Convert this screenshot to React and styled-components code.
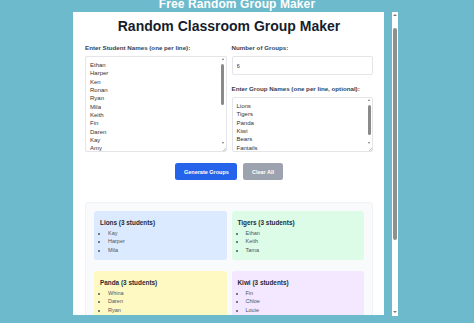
import React from 'react';
import styled, { createGlobalStyle } from 'styled-components';

const GlobalStyle = createGlobalStyle`
  html, body {
    margin: 0;
    padding: 0;
    height: 323px;
    overflow: hidden;
    background: #6cbacc;
    font-family: "Liberation Sans", Arial, sans-serif;
  }
  * { box-sizing: border-box; }
`;

const SiteTitle = styled.div`
  margin: -2px 0 2px;
  height: 12px;
  font-size: 12px;
  line-height: 12px;
  font-weight: 700;
  color: #ffffff;
  text-align: center;
  letter-spacing: 0.1px;
`;

const Frame = styled.div`
  display: flex;
  justify-content: center;
  gap: 8px;
  padding-right: 3px;
`;

const Panel = styled.div`
  width: 311px;
  height: 303px;
  padding: 6px 11px 0 12px;
  background: #ffffff;
  overflow: hidden;
`;

const Heading = styled.h1`
  margin: 0 0 10px;
  font-size: 14px;
  line-height: 16px;
  font-weight: 700;
  color: #161d2b;
  text-align: center;
`;

const FormGrid = styled.div`
  display: grid;
  grid-template-columns: 1fr 1fr;
  column-gap: 5px;
`;

const Field = styled.div`
  display: flex;
  flex-direction: column;
`;

const Label = styled.label`
  display: block;
  margin-bottom: 4px;
  font-size: 6.2px;
  line-height: 8px;
  font-weight: 700;
  color: #374151;
`;

const AreaWrap = styled.div`
  position: relative;
  height: ${(p) => p.$height}px;
`;

const TextArea = styled.textarea`
  display: block;
  width: 100%;
  height: 100%;
  margin: 0;
  padding: 4px 10px 4px 4px;
  border: 1px solid #e3e5e8;
  border-radius: 2px;
  font-family: "Liberation Sans", Arial, sans-serif;
  font-size: 6px;
  line-height: 8.33px;
  color: #333333;
  background: #ffffff;
  resize: none;
  overflow: hidden;
  outline: none;
`;

const NumberInput = styled.input`
  display: block;
  width: 100%;
  height: 19px;
  margin: 0 0 10px;
  padding: 0 4px;
  border: 1px solid #e3e5e8;
  border-radius: 2px;
  font-family: "Liberation Sans", Arial, sans-serif;
  font-size: 6px;
  color: #333333;
  outline: none;
`;

const MiniScroll = styled.div`
  position: absolute;
  top: 1px;
  right: 2px;
  bottom: 7px;
  width: 4px;
  display: flex;
  flex-direction: column;
  align-items: center;
`;

const Arrow = styled.div`
  flex: none;
  width: 0;
  height: 0;
  margin: ${(p) => (p.$dir === 'up' ? '1px 0 2px' : '2px 0 1px')};
  border-left: 1.5px solid transparent;
  border-right: 1.5px solid transparent;
  ${(p) => (p.$dir === 'up' ? 'border-bottom' : 'border-top')}: 2px solid #7a7a7a;
`;

const MiniThumb = styled.div`
  flex: none;
  width: 3px;
  height: ${(p) => p.$height}px;
  margin-top: 2px;
  border-radius: 2px;
  background: #8a8a8a;
`;

const Spacer = styled.div`
  flex: 1;
`;

const Grip = styled.svg`
  position: absolute;
  right: 1px;
  bottom: 1px;
  width: 4px;
  height: 4px;
`;

const ButtonRow = styled.div`
  display: flex;
  justify-content: center;
  gap: 6px;
  margin-top: 11px;
`;

const Button = styled.button`
  height: 17px;
  padding: 0 8.5px;
  border: none;
  border-radius: 2.5px;
  background: ${(p) => (p.$variant === 'gray' ? '#9ca3af' : '#2563eb')};
  color: #ffffff;
  font-family: "Liberation Sans", Arial, sans-serif;
  font-size: 5.5px;
  font-weight: 700;
  cursor: pointer;
`;

const Results = styled.div`
  display: grid;
  grid-template-columns: 1fr 1fr;
  column-gap: 5px;
  row-gap: 11px;
  margin-top: 22px;
  padding: 8px 8px;
  background: #f9fafb;
  border: 1px solid #f1f2f4;
  border-radius: 3px;
`;

const Card = styled.div`
  padding: 7px 6px 6px;
  border-radius: 3px;
  background: ${(p) => p.$bg};
`;

const CardTitle = styled.h3`
  margin: 0 0 2px;
  font-size: 6.4px;
  line-height: 9px;
  font-weight: 700;
  color: #1f2937;
`;

const Members = styled.ul`
  margin: 0;
  padding-left: 8px;
  list-style: disc;
`;

const Member = styled.li`
  font-size: 5.5px;
  line-height: 8.33px;
  color: #4b5563;
`;

const PageScroll = styled.div`
  width: 6px;
  height: 304px;
  padding: 1px 0 2px;
  background: #ffffff;
  display: flex;
  flex-direction: column;
  align-items: center;
`;

const PageArrow = styled.div`
  flex: none;
  width: 0;
  height: 0;
  margin: 1px 0;
  border-left: 2px solid transparent;
  border-right: 2px solid transparent;
  ${(p) => (p.$dir === 'up' ? 'border-bottom' : 'border-top')}: 2px solid #7a7a7a;
`;

const PageThumb = styled.div`
  flex: none;
  width: 4px;
  height: 212px;
  margin-top: 11px;
  border-radius: 2px;
  background: #8f8f8f;
`;

const students = ['Ethan', 'Harper', 'Ken', 'Ronan', 'Ryan', 'Mila', 'Keith', 'Fin', 'Daren', 'Kay', 'Amy', 'Whina', 'Chloe', 'Tama', 'Louie'];
const groupNames = ['Lions', 'Tigers', 'Panda', 'Kiwi', 'Bears', 'Fantails'];

const groups = [
  { name: 'Lions', bg: '#dbeafe', members: ['Kay', 'Harper', 'Mila'] },
  { name: 'Tigers', bg: '#dcfce7', members: ['Ethan', 'Keith', 'Tama'] },
  { name: 'Panda', bg: '#fef9c3', members: ['Whina', 'Daren', 'Ryan'] },
  { name: 'Kiwi', bg: '#f3e8ff', members: ['Fin', 'Chloe', 'Louie'] },
];

const FakeScroll = ({ thumb }) => (
  <>
    <MiniScroll>
      <Arrow $dir="up" />
      <MiniThumb $height={thumb} />
      <Spacer />
      <Arrow $dir="down" />
    </MiniScroll>
    <Grip viewBox="0 0 4 4">
      <path d="M1 4 L4 1 M2.6 4 L4 2.6" stroke="#8a8a8a" strokeWidth="0.5" />
    </Grip>
  </>
);

const App = () => (
  <>
    <GlobalStyle />
    <SiteTitle>Free Random Group Maker</SiteTitle>
    <Frame>
      <Panel>
        <Heading>Random Classroom Group Maker</Heading>
        <FormGrid>
          <Field>
            <Label>Enter Student Names (one per line):</Label>
            <AreaWrap $height={96}>
              <TextArea readOnly defaultValue={students.join('\n')} />
              <FakeScroll thumb={41} />
            </AreaWrap>
          </Field>
          <Field>
            <Label>Number of Groups:</Label>
            <NumberInput type="text" readOnly defaultValue="6" />
            <Label>Enter Group Names (one per line, optional):</Label>
            <AreaWrap $height={55}>
              <TextArea readOnly defaultValue={groupNames.join('\n')} />
              <FakeScroll thumb={30} />
            </AreaWrap>
          </Field>
        </FormGrid>
        <ButtonRow>
          <Button>Generate Groups</Button>
          <Button $variant="gray">Clear All</Button>
        </ButtonRow>
        <Results>
          {groups.map((g) => (
            <Card key={g.name} $bg={g.bg}>
              <CardTitle>{g.name} ({g.members.length} students)</CardTitle>
              <Members>
                {g.members.map((m) => (
                  <Member key={m}>{m}</Member>
                ))}
              </Members>
            </Card>
          ))}
        </Results>
      </Panel>
      <PageScroll>
        <PageArrow $dir="up" />
        <PageThumb />
        <Spacer />
        <PageArrow $dir="down" />
      </PageScroll>
    </Frame>
  </>
);

export default App;
